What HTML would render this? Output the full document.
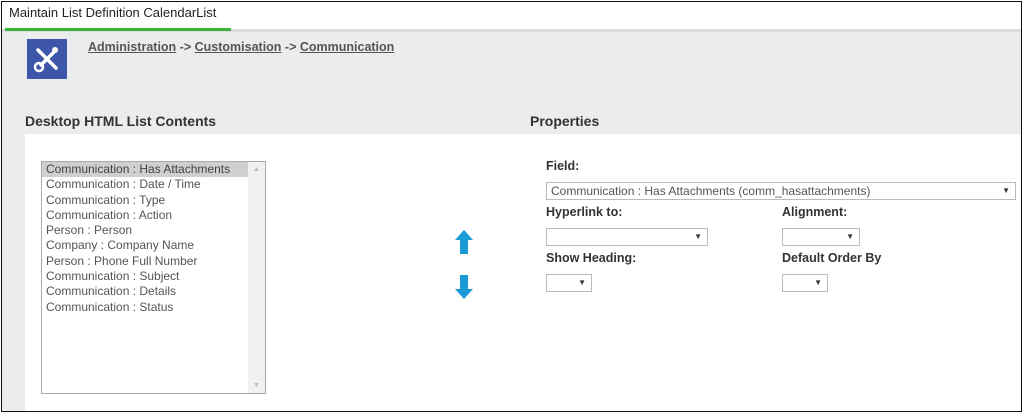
<!DOCTYPE html>
<html><head><style>
*{margin:0;padding:0;box-sizing:border-box}
body{width:1024px;height:413px;background:#fff;font-family:"Liberation Sans",Arial,sans-serif;position:relative;overflow:hidden}
.frame{position:absolute;left:1px;top:1px;width:1021px;height:411px;border:1px solid #111;background:#ebecee}
.top{position:absolute;left:0;top:0;width:1019px;height:27px;background:#fff}
.title{position:absolute;left:7px;top:3px;font-size:13px;color:#222}
.green{position:absolute;left:3px;top:26px;width:226px;height:3px;background:#3cb43c}
.shade{position:absolute;left:0;top:27px;width:1019px;height:3px;background:#dcdcdc}
.icon{position:absolute;left:25px;top:37px;width:40px;height:40px;background:#3d56a8}
.crumb{position:absolute;left:86px;top:38px;font-size:12.5px;font-weight:bold;color:#555}
.crumb u{color:#555}
.h{position:absolute;font-size:14px;font-weight:bold;color:#333}
.white{position:absolute;left:23px;top:132px;width:996px;height:277px;background:#fff}
.list{position:absolute;left:39px;top:159px;width:225px;height:233px;border:1px solid #aaa;background:#fff;font-size:12px;color:#555}
.list .it{height:15.3px;line-height:15px;padding-left:4px;width:206px}
.list .sel{background:#cfcfcf;color:#444}
.sb{position:absolute;right:0;top:0;width:17px;height:100%;background:#f1f1f1}
.lbl{position:absolute;font-size:12.5px;font-weight:bold;color:#333}
.sel2{position:absolute;height:18px;border:1px solid #bbb;background:#fff;font-size:12px;color:#555;padding-left:4px;line-height:16px}
.sel2:after{content:"▼";position:absolute;right:5px;top:0;font-size:8px;color:#333}
</style></head><body>
<div class="frame">
<div class="top"><div class="title">Maintain List Definition CalendarList</div></div>
<div class="shade"></div>
<div class="green"></div>
<div class="icon"><svg width="40" height="40" viewBox="0 0 40 40"><g stroke="#fff" stroke-width="3.5" stroke-linecap="round" fill="none"><path d="M11 11 L29 29"/><path d="M29 11 L14 26"/></g><circle cx="12" cy="28" r="4" fill="none" stroke="#fff" stroke-width="2.5"/><circle cx="28" cy="11" r="3" fill="#fff"/></svg></div>
<div class="crumb"><u>Administration</u> -&gt; <u>Customisation</u> -&gt; <u>Communication</u></div>
<div class="h" style="left:23px;top:111px">Desktop HTML List Contents</div>
<div class="h" style="left:528px;top:111px">Properties</div>
<div class="white"></div>
<div class="list">
<div class="it sel">Communication : Has Attachments</div>
<div class="it">Communication : Date / Time</div>
<div class="it">Communication : Type</div>
<div class="it">Communication : Action</div>
<div class="it">Person : Person</div>
<div class="it">Company : Company Name</div>
<div class="it">Person : Phone Full Number</div>
<div class="it">Communication : Subject</div>
<div class="it">Communication : Details</div>
<div class="it">Communication : Status</div>
<div class="sb"><span style="position:absolute;left:5px;top:4px;font-size:7px;color:#bbb">▲</span><span style="position:absolute;left:5px;bottom:4px;font-size:7px;color:#bbb">▼</span></div>
</div>
<svg style="position:absolute;left:452px;top:228px" width="20" height="70" viewBox="0 0 20 70"><path d="M10 0 L19 10 L14 10 L14 24 L6 24 L6 10 L1 10 Z" fill="#1a9ad6"/><path d="M6 45 L14 45 L14 59 L19 59 L10 69 L1 59 L6 59 Z" fill="#1a9ad6"/></svg>
<div class="lbl" style="left:544px;top:157px">Field:</div>
<div class="sel2" style="left:544px;top:180px;width:470px">Communication : Has Attachments (comm_hasattachments)</div>
<div class="lbl" style="left:544px;top:203px">Hyperlink to:</div>
<div class="lbl" style="left:780px;top:203px">Alignment:</div>
<div class="sel2" style="left:544px;top:226px;width:162px"></div>
<div class="sel2" style="left:780px;top:226px;width:78px"></div>
<div class="lbl" style="left:544px;top:249px">Show Heading:</div>
<div class="lbl" style="left:780px;top:249px">Default Order By</div>
<div class="sel2" style="left:544px;top:272px;width:46px"></div>
<div class="sel2" style="left:780px;top:272px;width:46px"></div>
</div>
</body></html>
